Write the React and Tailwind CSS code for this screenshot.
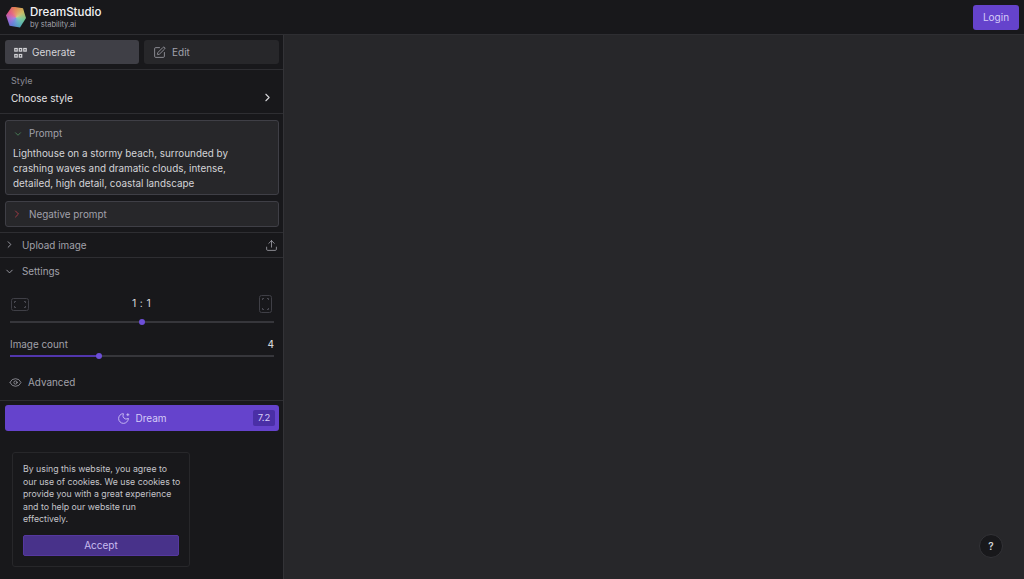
import { ChevronDown, ChevronRight, Eye, MoonStar, SquarePen, Upload } from 'lucide-react';

function GenerateIcon() {
  return (
    <svg width="13" height="12" viewBox="0 0 13 12" fill="none" stroke="currentColor" strokeWidth="1.2">
      <rect x="0.8" y="1.5" width="2.4" height="2.6" />
      <rect x="5.3" y="1.5" width="2.4" height="2.6" />
      <rect x="9.8" y="1.5" width="2.4" height="2.6" />
      <rect x="0.8" y="7.5" width="2.4" height="2.6" />
      <rect x="5.3" y="7.5" width="2.4" height="2.6" />
    </svg>
  );
}

function FrameIcon({ width, height }) {
  const w = width - 1;
  const h = height - 1;
  return (
    <svg width={width} height={height} viewBox={`0 0 ${width} ${height}`} fill="none" stroke="#3f3f46">
      <rect x="0.5" y="0.5" width={w} height={h} rx="2" />
      <path
        d={`M3.5 5V3.5H5 M${width - 5} 3.5H${width - 3.5}V5 M${width - 3.5} ${height - 5}V${height - 3.5}H${width - 5} M5 ${height - 3.5}H3.5V${height - 5}`}
        stroke="#4a4a52"
      />
    </svg>
  );
}

function Slider({ percent, filled }) {
  return (
    <div className="relative h-[2px] bg-[#36363b]">
      {filled ? <div className="h-full bg-[#5136ad]" style={{ width: `${percent}%` }} /> : null}
      <div
        className="absolute top-[-2px] ml-[-3px] h-[6px] w-[6px] rounded-full bg-[#6d4fd8]"
        style={{ left: `${percent}%` }}
      />
    </div>
  );
}

export default function App() {
  return (
    <div className="relative flex h-[579px] w-[1024px] flex-col overflow-hidden bg-[#27272a] font-['Inter',sans-serif] text-[#e4e4e7]">
      <header className="flex h-[35px] shrink-0 items-center justify-between border-b border-[#2e2e32] bg-[#18181b] pl-[6px] pr-[5px]">
        <div className="flex items-center gap-1">
          <div className="h-[21px] w-5 bg-[radial-gradient(circle,#ffffff40,#ffffff00_70%),conic-gradient(#e0864f,#c9b85c,#6cc48e,#4fa8b8,#5a78d8,#a05fd0,#e0507a,#e0864f)] [clip-path:polygon(30%_0,85%_8%,100%_55%,70%_100%,18%_92%,0_42%)]" />
          <div className="mt-[1px] flex flex-col">
            <span className="text-[11.5px] leading-[15px] font-medium text-[#f4f4f5]">DreamStudio</span>
            <span className="text-[7.5px] leading-[10px] text-[#a1a1aa]">by stability.ai</span>
          </div>
        </div>
        <button className="h-[25px] w-[46px] rounded-[3px] bg-[#6543cc] text-[10px] text-[#d6ccf7]">Login</button>
      </header>

      <div className="flex min-h-0 flex-1">
        <aside className="flex w-[284px] shrink-0 flex-col border-r border-[#333337] bg-[#18181b]">
          <div className="flex h-[35px] shrink-0 gap-[5px] border-b border-[#2e2e32] pl-[5px] pr-[4px] pt-[5px]">
            <button className="flex h-6 w-[134px] items-center gap-[5px] rounded-[3px] bg-[#3f3f46] pl-[9px] pt-[1px] text-[10px] text-[#d4d4d8]">
              <GenerateIcon />
              Generate
            </button>
            <button className="flex h-6 w-[135px] items-center gap-[6px] rounded-[3px] bg-[#27272a] pl-[9px] pt-[1px] text-[10px] text-[#a1a1aa]">
              <SquarePen size={13} strokeWidth={1.5} />
              Edit
            </button>
          </div>

          <div className="flex h-[44px] shrink-0 items-center justify-between border-b border-[#2e2e32] pl-[11px] pr-[9px]">
            <div className="mb-[3px] flex flex-col gap-[3px]">
              <span className="text-[9px] leading-[12px] text-[#8b8b94]">Style</span>
              <span className="text-[10px] leading-[16px] text-[#e4e4e7]">Choose style</span>
            </div>
            <ChevronRight size={13} className="mt-[12px] text-[#d4d4d8]" />
          </div>

          <div className="flex h-[119px] shrink-0 flex-col gap-[6px] border-b border-[#2e2e32] pl-[5px] pr-[4px] pt-[6px]">
            <div className="h-[75px] rounded-[3px] border border-[#3f3f46] bg-[#27272a] pl-[7px] pt-[6px]">
              <div className="flex h-[14px] items-center gap-[6px] text-[9.7px] text-[#a1a1aa]">
                <ChevronDown size={10} className="text-[#4d8a5c]" />
                Prompt
              </div>
              <p className="mt-[5px] text-[9.9px] leading-[15px] text-[#d4d4d8]">
                Lighthouse on a stormy beach, surrounded by
                <br />
                crashing waves and dramatic clouds, intense,
                <br />
                detailed, high detail, coastal landscape
              </p>
            </div>
            <div className="flex h-[26px] items-center gap-[6px] rounded-[3px] border border-[#3f3f46] bg-[#27272a] pl-[5px] text-[9.9px] text-[#a1a1aa]">
              <ChevronRight size={12} className="text-[#a13a44]" />
              Negative prompt
            </div>
          </div>

          <div className="flex h-[25px] shrink-0 items-center justify-between border-b border-[#2e2e32] pl-[4px] pr-[5px] text-[9.9px] text-[#a1a1aa]">
            <div className="flex items-center gap-[7px]">
              <ChevronRight size={11} />
              Upload image
            </div>
            <Upload size={13} strokeWidth={1.5} />
          </div>

          <div className="flex h-[143px] shrink-0 flex-col border-b border-[#2e2e32] pl-[10px] pr-[9px]">
            <div className="ml-[-6px] flex h-[26px] shrink-0 items-center gap-[7px] pt-[1px] text-[9.9px] text-[#a1a1aa]">
              <ChevronDown size={11} />
              Settings
            </div>
            <div className="mt-[11px] grid h-[16px] grid-cols-[1fr_auto_1fr] items-center pl-[1px] pr-[2px]">
              <div className="justify-self-start">
                <FrameIcon width={18} height={13} />
              </div>
              <span className="text-[10.5px] tracking-[0.3px] text-[#d4d4d8]">1 : 1</span>
              <div className="justify-self-end">
                <FrameIcon width={13} height={18} />
              </div>
            </div>
            <div className="mt-[10px]">
              <Slider percent={50} />
            </div>
            <div className="mt-[15px] flex h-[12px] items-center justify-between text-[9.9px] text-[#a1a1aa]">
              Image count
              <span className="font-medium text-[#d4d4d8]">4</span>
            </div>
            <div className="mt-[5px]">
              <Slider percent={33.7} filled />
            </div>
            <div className="mt-[18px] ml-[-1px] flex h-[14px] items-center gap-[6px] text-[9.9px] text-[#a1a1aa]">
              <Eye size={13} strokeWidth={1.4} />
              Advanced
            </div>
          </div>

          <div className="pl-[5px] pr-[4px] pt-[4px]">
            <button className="relative flex h-[26px] w-full items-center justify-center gap-[5px] rounded-[3px] bg-[#6543cc] pt-[1px] text-[10px] text-[#d6ccf7]">
              <MoonStar size={13} strokeWidth={1.5} />
              Dream
              <span className="absolute right-[4px] top-[5px] flex h-4 w-[22px] items-center justify-center rounded-[2px] bg-[#4a2fa6] text-[9.5px]">
                7.2
              </span>
            </button>
          </div>

          <div className="ml-[12px] mt-[21px] h-[115px] w-[178px] rounded-[3px] border border-[#27272a] bg-[#18181b] px-[10px] pt-[10px]">
            <p className="whitespace-nowrap text-[8.75px] leading-[12.5px] text-[#c4c4ca]">
              By using this website, you agree to
              <br />
              our use of cookies. We use cookies to
              <br />
              provide you with a great experience
              <br />
              and to help our website run
              <br />
              effectively.
            </p>
            <button className="mt-[9px] h-[21px] w-full rounded-[2px] border border-[#55389f] bg-[#48328a] text-[10px] text-[#c9bdf0]">
              Accept
            </button>
          </div>
        </aside>
        <main className="flex-1" />
      </div>

      <button className="absolute bottom-[21px] right-[21px] flex h-6 w-6 items-center justify-center rounded-full border border-[#333337] bg-[#18181b] text-[10px] font-semibold text-[#d4d4d8]">
        ?
      </button>
    </div>
  );
}
